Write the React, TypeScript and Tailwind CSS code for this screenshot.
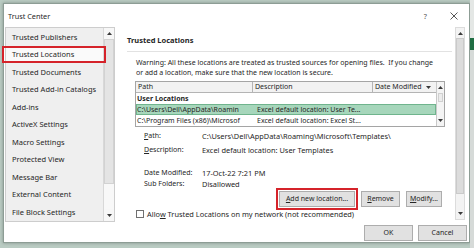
import React from 'react';

const sideItems = [
  'Trusted Publishers',
  'Trusted Locations',
  'Trusted Documents',
  'Trusted Add-in Catalogs',
  'Add-ins',
  'ActiveX Settings',
  'Macro Settings',
  'Protected View',
  'Message Bar',
  'External Content',
  'File Block Settings',
];

const Tri = ({ up = false }: { up?: boolean }) => (
  <svg width="5" height="3" viewBox="0 0 5 3" className="fill-[#3a3a3a]">
    <path d={up ? 'M0 3L2.5 0L5 3Z' : 'M0 0L2.5 3L5 0Z'} />
  </svg>
);

const U = ({ children }: { children: React.ReactNode }) => (
  <span className="underline underline-offset-[1px]">{children}</span>
);

const Btn = ({ children, className = '' }: { children: React.ReactNode; className?: string }) => (
  <div className={`h-[16px] flex items-center justify-center bg-[#e1e1e1] border border-[#adadad] ${className}`}>
    {children}
  </div>
);

const SideList = () => (
  <div className="ml-[1px] w-[110px] h-[195px] bg-[#efefef] border border-[#cdcdcd] flex text-[7.5px]">
    <div className="flex-1 flex flex-col">
      {sideItems.map((item, i) => (
        <div
          key={item}
          className={`relative h-[17.5px] flex items-center pl-[6px] whitespace-nowrap ${i === 1 ? 'bg-[#fafafa]' : ''}`}
        >
          {item}
          {/* red annotation around the selected page */}
          {i === 1 && <div className="absolute -left-[4px] -right-[3px] top-0 bottom-0 border-2 border-[#d5232a]" />}
        </div>
      ))}
    </div>
    <div className="w-[11px] border-l border-[#d8d8d8] flex flex-col">
      <div className="h-[11px] flex items-center justify-center bg-[#f7f7f7]"><Tri up /></div>
      <div className="h-[145px] bg-[#e4e4e4] border border-[#d2d2d2]" />
      <div className="flex-1 bg-[#f8f8f8]" />
      <div className="h-[12px] flex items-center justify-center bg-[#f7f7f7]"><Tri /></div>
    </div>
  </div>
);

const LocationsTable = () => (
  <div className="mt-[4px] ml-[8px] w-[310px] border border-[#a5a5a5] flex bg-white">
    <div className="w-[300px] flex flex-col">
      <div className="h-[11px] flex bg-[#f2f2f2] border-b border-[#b4b4b4]">
        <div className="w-[117px] border-r border-[#b4b4b4] pl-[2px] flex items-center">Path</div>
        <div className="w-[120px] border-r border-[#b4b4b4] pl-[2px] flex items-center">Description</div>
        <div className="flex-1 pl-[2px] flex items-center gap-[4px]">Date Modified <Tri /></div>
      </div>
      <div className="h-[11px] pl-[1px] flex items-center font-bold">User Locations</div>
      <div className="h-[11px] flex items-center bg-[#a6d6bb] border border-[#6fb48d] whitespace-nowrap overflow-hidden">
        <div className="w-[117px] overflow-hidden">C:\Users\Dell\AppData\Roamin</div>
        <div className="pl-[3px]">Excel default location: User Te...</div>
      </div>
      <div className="h-[11px] flex items-center whitespace-nowrap overflow-hidden">
        <div className="w-[118px] pl-[1px] overflow-hidden">C:\Program Files (x86)\Microsof</div>
        <div className="pl-[3px]">Excel default location: Excel St...</div>
      </div>
    </div>
    <div className="flex-1 border-l border-[#c8c8c8] flex flex-col bg-[#f4f4f4]">
      <div className="h-[11px] flex items-center justify-center"><Tri up /></div>
      <div className="mx-[1px] h-[9px] bg-[#ececec] border border-[#d0d0d0]" />
      <div className="flex-1" />
      <div className="h-[11px] flex items-center justify-center"><Tri /></div>
    </div>
  </div>
);

const Detail = ({ label, value, className = '' }: { label: React.ReactNode; value: string; className?: string }) => (
  <div className={`flex h-[10px] items-center whitespace-nowrap ${className}`}>
    <div className="w-[58px]">{label}</div>
    <div className="text-[7.4px]">{value}</div>
  </div>
);

const RightPane = () => (
  <div className="ml-[12px] w-[328px] flex flex-col">
    <div className="mt-[8px] h-[10px] flex items-center font-bold text-[7.5px]">Trusted Locations</div>
    <div className="mt-[6px] mr-[3px] h-px bg-[#e2e2e2]" />
    <div className="mt-[6px] pl-[9px] leading-[9.5px] whitespace-nowrap">
      <div>Warning: All these locations are treated as trusted sources for opening files.&nbsp; If you change</div>
      <div>or add a location, make sure that the new location is secure.</div>
    </div>
    <LocationsTable />
    <div className="mt-[4px] pl-[17px] flex flex-col">
      <Detail label={<><U>P</U>ath:</>} value={'C:\\Users\\Dell\\AppData\\Roaming\\Microsoft\\Templates\\'} />
      <Detail className="mt-[4px]" label={<><U>D</U>escription:</>} value="Excel default location: User Templates" />
      <Detail className="mt-[13px]" label="Date Modified:" value="17-Oct-22 7:21 PM" />
      <Detail className="mt-[1px]" label="Sub Folders:" value="Disallowed" />
    </div>
    <div className="mt-[2px] pl-[152px] flex gap-[6px]">
      <div className="relative">
        <Btn className="w-[76px]"><span><U>A</U>dd new location...</span></Btn>
        <div className="absolute -inset-[3px] border-2 border-[#d5232a]" />
      </div>
      <Btn className="w-[39px]"><span><U>R</U>emove</span></Btn>
      <Btn className="w-[36px]"><span><U>M</U>odify...</span></Btn>
    </div>
    <div className="mt-[2px] h-[10px] pl-[9px] flex items-center gap-[3px] whitespace-nowrap text-[7.4px]">
      <div className="w-[8px] h-[8px] border border-[#707070] bg-white" />
      <span>Allo<U>w</U> Trusted Locations on my network (not recommended)</span>
    </div>
  </div>
);

const PaneScroll = () => (
  <div className="ml-auto mr-[4px] w-[10px] h-[193px] flex flex-col bg-[#f3f3f3] border border-[#dcdcdc]">
    <div className="h-[10px] flex items-center justify-center"><Tri up /></div>
    <div className="h-[156px] bg-[#dcdcdc] border border-[#cacaca]" />
    <div className="flex-1" />
    <div className="h-[11px] flex items-center justify-center"><Tri /></div>
  </div>
);

export default function App() {
  return (
    <div className="w-[474px] h-[248px] overflow-hidden bg-[#b9cbc2] flex font-['Noto_Sans',sans-serif] text-[7px] leading-[10px] text-[#262626]">
      <div className="pl-[3px] pt-[3px]">
        <div className="w-[467px] h-[240px] bg-white border border-[#8d9d95] flex flex-col shadow-[0_0_3px_rgba(0,0,0,0.3)]">
          {/* title bar */}
          <div className="h-[23px] flex items-center pl-[4px] pr-[11px] text-[7.3px]">
            <span>Trust Center</span>
            <span className="ml-auto mr-[23px] text-[#555]">?</span>
            <svg width="8" height="8" viewBox="0 0 8 8" className="stroke-[#444]" strokeWidth="0.9">
              <path d="M0.5 0.5L7.5 7.5M7.5 0.5L0.5 7.5" />
            </svg>
          </div>
          {/* body */}
          <div className="h-[195px] flex">
            <SideList />
            <RightPane />
            <PaneScroll />
          </div>
          {/* footer */}
          <div className="flex-1 flex justify-end gap-[5px] pt-[3px] pr-[2px]">
            <Btn className="w-[49px] border-[#2f2f2f]">OK</Btn>
            <Btn className="w-[49px]">Cancel</Btn>
          </div>
        </div>
      </div>
      <div className="flex-1 flex flex-col">
        <div className="h-[38px] bg-[#e4e7e5]" />
        <div className="h-[12px] bg-[#1f6e43]" />
        <div className="flex-1 bg-[#d6dad8]" />
      </div>
    </div>
  );
}
